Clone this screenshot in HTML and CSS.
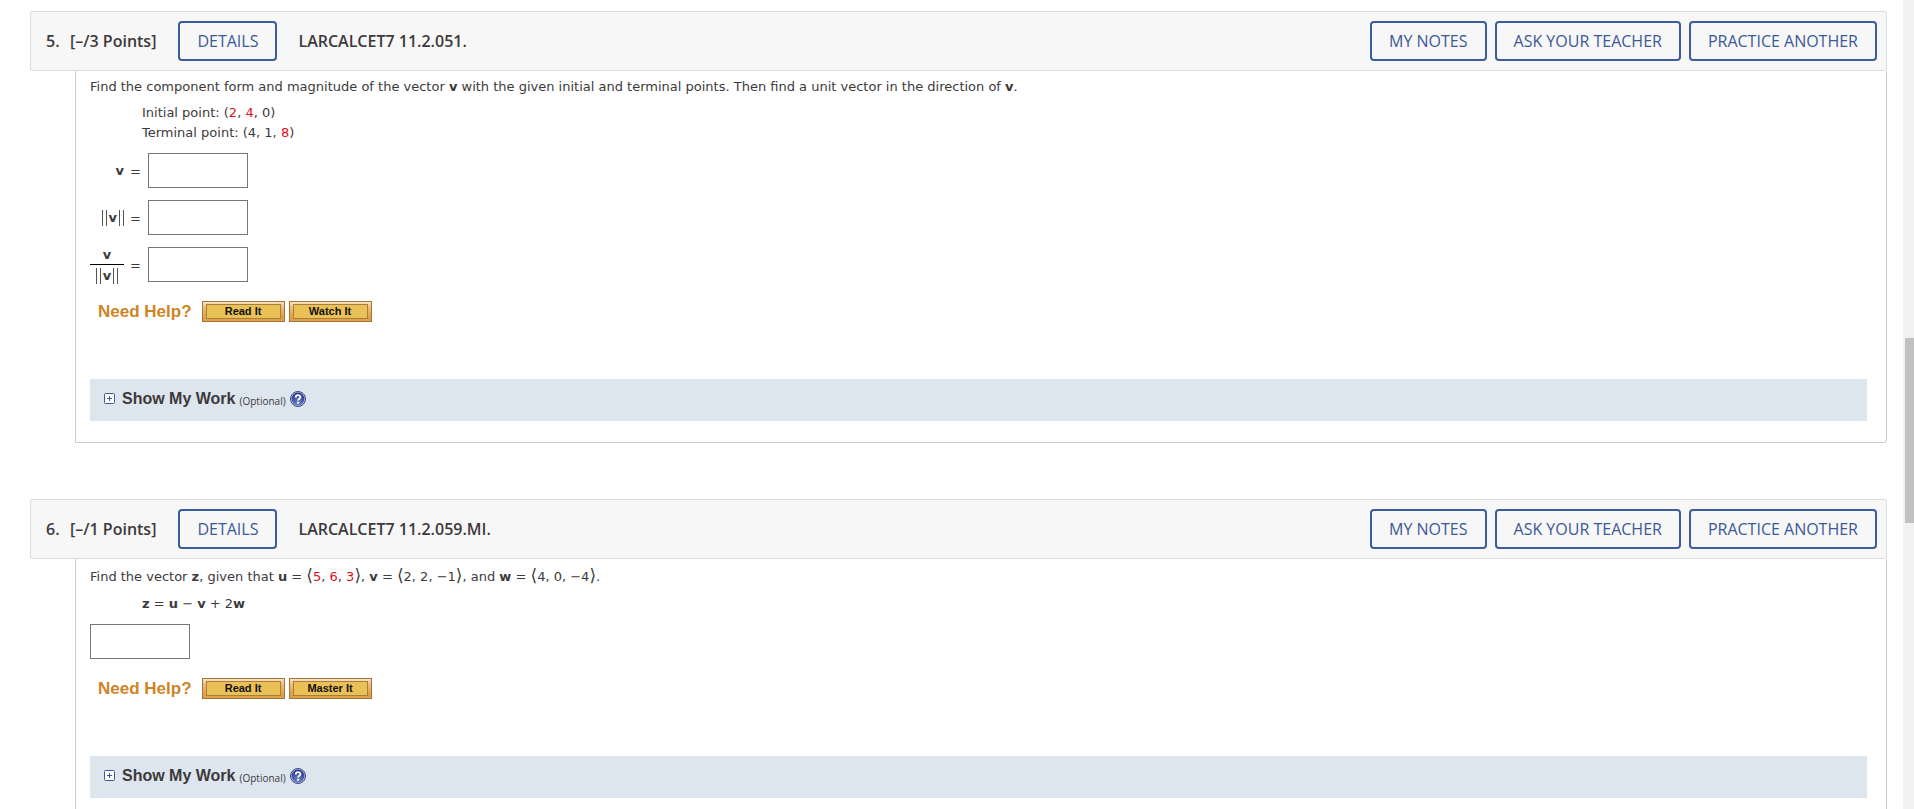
FILE: index.html
```
<!DOCTYPE html>
<html lang="en">
<head>
    <meta charset="UTF-8">
    <title>Assignment</title>
    <link rel="stylesheet" href="styles.css">
</head>
<body>
<svg class="defs" width="0" height="0">
    <defs>
        <radialGradient id="ball" cx="0.5" cy="0.8" r="0.8">
            <stop offset="0" stop-color="#6f86cc"/>
            <stop offset="1" stop-color="#25327e"/>
        </radialGradient>
        <symbol id="help" viewBox="0 0 16 16">
            <circle cx="8" cy="8" r="7.5" fill="#c3cce6" stroke="#34468c"/>
            <circle cx="8" cy="8" r="6.4" fill="url(#ball)"/>
            <path d="M5.8 6.4C5.8 3.4 10.4 3.5 10.4 6.1C10.4 7.8 8.1 7.8 8.1 9.6" fill="none" stroke="#fff" stroke-width="1.8"/>
            <circle cx="8.1" cy="11.8" r="1.1" fill="#fff"/>
        </symbol>
        <symbol id="plus" viewBox="0 0 11 11">
            <rect x="0.5" y="0.5" width="10" height="10" rx="1" fill="#fff" stroke="#3c5a98"/>
            <path d="M3 5.5H8M5.5 3V8" stroke="#3c5a98"/>
        </symbol>
    </defs>
</svg>
<main class="page">
    <section class="question">
        <header class="head">
            <span class="num">5.</span>
            <span class="points">[–/3 Points]</span>
            <button type="button" class="btn">DETAILS</button>
            <h2 class="name">LARCALCET7 11.2.051.</h2>
            <div class="tools">
                <button type="button" class="btn">MY NOTES</button>
                <button type="button" class="btn">ASK YOUR TEACHER</button>
                <button type="button" class="btn">PRACTICE ANOTHER</button>
            </div>
        </header>
        <div class="body">
            <p>Find the component form and magnitude of the vector <b>v</b> with the given initial and terminal points. Then find a unit vector in the direction of <b>v</b>.</p>
            <div class="indent">
                <p>Initial point: (<em>2</em>, <em>4</em>, 0)</p>
                <p>Terminal point: (4, 1, <em>8</em>)</p>
            </div>
            <div class="answers">
                <label for="a1"><b>v</b></label><span class="eq">=</span><input type="text" id="a1">
                <label for="a2"><span class="norm"><b>v</b></span></label><span class="eq">=</span><input type="text" id="a2">
                <label for="a3" class="frac"><b class="top">v</b><span class="norm"><b>v</b></span></label><span class="eq">=</span><input type="text" id="a3">
            </div>
            <div class="need">
                <span class="need-title">Need Help?</span>
                <button type="button" class="gold"><span>Read It</span></button>
                <button type="button" class="gold"><span>Watch It</span></button>
            </div>
            <div class="work">
                <svg class="plus"><use href="#plus"/></svg>
                <a href="#" class="work-title">Show My Work</a>
                <small>(Optional)</small>
                <svg class="help"><use href="#help"/></svg>
            </div>
        </div>
    </section>

    <section class="question">
        <header class="head">
            <span class="num">6.</span>
            <span class="points">[–/1 Points]</span>
            <button type="button" class="btn">DETAILS</button>
            <h2 class="name">LARCALCET7 11.2.059.MI.</h2>
            <div class="tools">
                <button type="button" class="btn">MY NOTES</button>
                <button type="button" class="btn">ASK YOUR TEACHER</button>
                <button type="button" class="btn">PRACTICE ANOTHER</button>
            </div>
        </header>
        <div class="body">
            <p class="tall">Find the vector <b>z</b>, given that <b>u</b> = <i>⟨</i><em>5</em>, <em>6</em>, <em>3</em><i>⟩</i>, <b>v</b> = <i>⟨</i>2, 2, −1<i>⟩</i>, and <b>w</b> = <i>⟨</i>4, 0, −4<i>⟩</i>.</p>
            <div class="indent">
                <p><label for="b1"><b>z</b> = <b>u</b> − <b>v</b> + 2<b>w</b></label></p>
            </div>
            <input type="text" id="b1">
            <div class="need">
                <span class="need-title">Need Help?</span>
                <button type="button" class="gold"><span>Read It</span></button>
                <button type="button" class="gold"><span>Master It</span></button>
            </div>
            <div class="work">
                <svg class="plus"><use href="#plus"/></svg>
                <a href="#" class="work-title">Show My Work</a>
                <small>(Optional)</small>
                <svg class="help"><use href="#help"/></svg>
            </div>
        </div>
    </section>
</main>
<div class="scroll"><div class="thumb"></div></div>
</body>
</html>
```
FILE: styles.css
```
*,:before,:after{box-sizing:border-box;margin:0;padding:0}
body{
    display:flex;
    height:100vh;
    overflow:hidden;
    background:#fff;
    color:#3c3a3a;
    font:13px/20px Verdana, "DejaVu Sans", sans-serif;
}
em{font-style:normal;color:#e00d1b;}
.defs{position:absolute;}

.page{
    flex:1;
    padding:11px 16px 0 30px;
}
.question{margin-bottom:56px;}

/* header bar */
.head{
    display:flex;
    align-items:center;
    height:60px;
    padding:0 9px 0 15px;
    background:#f7f7f7;
    border:1px solid #ddd;
    border-radius:2px;
    font:600 16px/24px "Open Sans", sans-serif;
}
.num{width:24px;}
.points{margin-right:22px;}
.name{
    margin-left:21px;
    font-size:16px;
    font-weight:600;
}
.tools{
    display:flex;
    gap:8px;
    margin-left:auto;
}
.btn{
    height:40px;
    padding:0 17px;
    border:2px solid #3b5e9a;
    border-radius:4px;
    background:none;
    color:#3b5998;
    font:400 16px/24px "Open Sans", sans-serif;
    cursor:pointer;
}

/* question body */
.body{
    margin-left:45px;
    padding:6px 19px 21px 14px;
    border:1px solid #ccc;
    border-top:0;
    border-radius:0 0 4px 0;
}
.indent{padding:6px 0 10px 52px;}
.tall{line-height:23px;}
.body i{
    font-style:normal;
    font-size:17px;
    line-height:16px;
}
input{
    display:block;
    width:100px;
    height:35px;
    padding:0 6px;
    border:1px solid #767676;
    background:#fff;
}
.answers{
    display:grid;
    grid-template-columns:34px 24px 100px;
    gap:12px 0;
    align-items:center;
    text-align:right;
}
.eq{padding:2px 7px 0 0;}

/* double bars on both sides */
.norm{
    display:inline-flex;
    align-items:center;
    gap:2px;
    height:16px;
    line-height:16px;
    vertical-align:middle;
}
.norm:before,.norm:after{
    content:"";
    width:5px;
    height:16px;
    border:solid #555;
    border-width:0 1px;
}
.frac{
    height:35px;
    text-align:center;
    line-height:16px;
}
.frac .top{
    display:block;
    height:18px;
    margin-bottom:2px;
    border-bottom:1px solid #000;
}

.need{
    display:flex;
    align-items:center;
    gap:4px;
    margin:19px 0 57px 8px;
}
.need-title{
    margin-right:6px;
    color:#d08424;
    font:bold 17px/20px "Liberation Sans", Arial, sans-serif;
}
.gold{
    width:83px;
    height:21px;
    padding:2px 3px;
    border:1px solid #a0763a;
    background:linear-gradient(#fbe3c8, #f3bd82 25%, #e0a048 80%);
    color:#111;
    font:bold 11px/13px "Liberation Sans", Arial, sans-serif;
    cursor:pointer;
}
.gold span{
    display:block;
    height:15px;
    border:1px solid #a5803c;
    background:#e9c157;
}

.work{
    display:flex;
    align-items:center;
    gap:4px;
    height:42px;
    padding:0 14px 3px;
    background:#dde5ee;
}
.plus{
    width:11px;
    height:11px;
    margin-right:3px;
}
.help{
    width:16px;
    height:16px;
}
.work-title{
    color:#3c3a3a;
    font:bold 16px/20px "Liberation Sans", Arial, sans-serif;
    text-decoration:none;
}
.work small{
    padding-top:4px;
    font:10px/14px "Open Sans", sans-serif;
}

/* scroll bar at the right edge */
.scroll{
    width:11px;
    padding:338px 0 0 2px;
    background:#f1f1f1;
}
.thumb{
    height:185px;
    background:#c1c1c1;
}
```
